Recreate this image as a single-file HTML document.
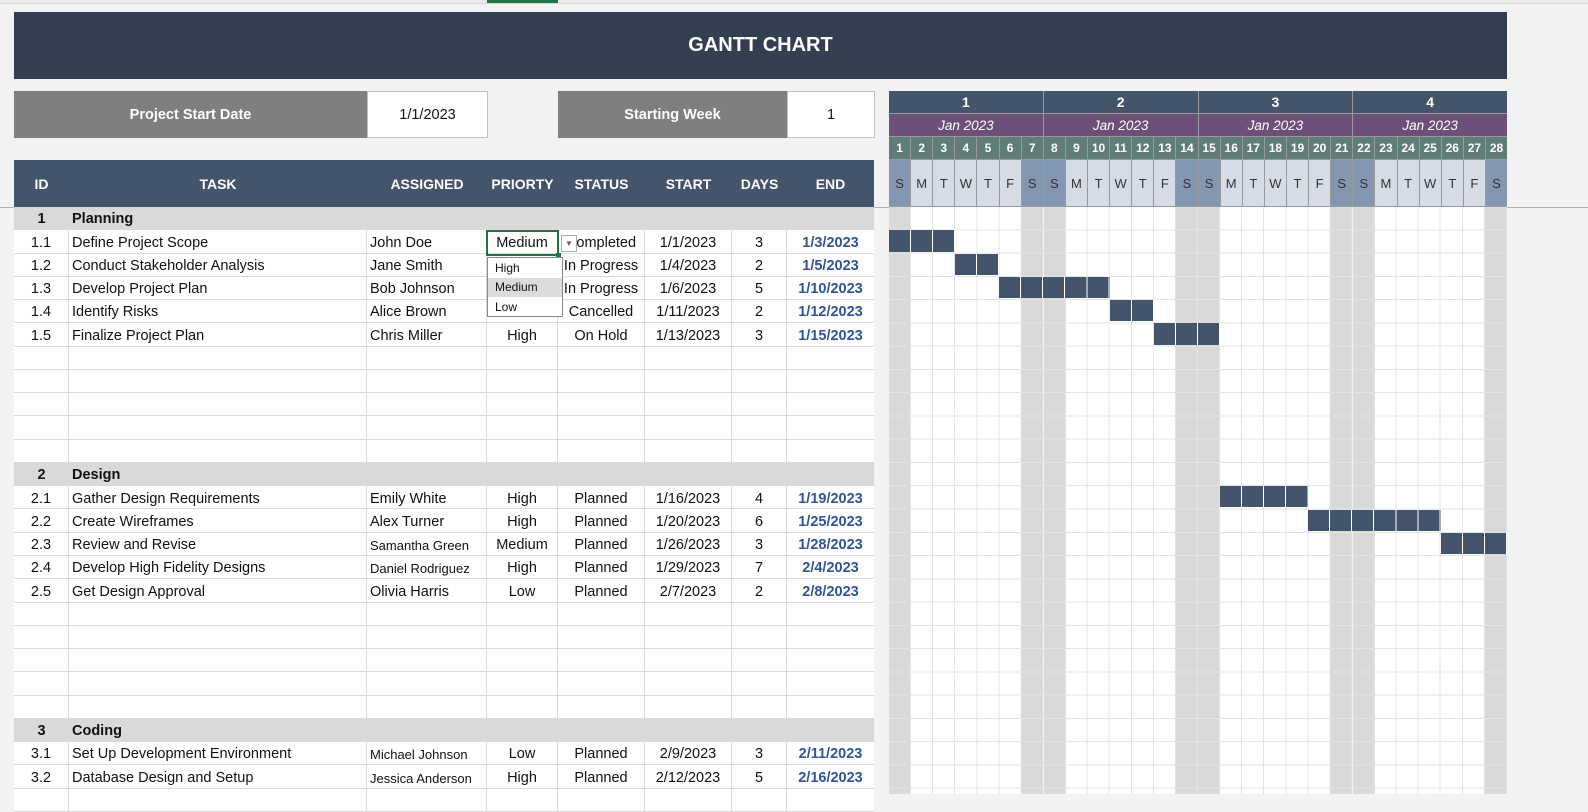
<!DOCTYPE html>
<html><head><meta charset="utf-8"><style>
*{box-sizing:border-box;margin:0;padding:0}
body{width:1588px;height:794px;overflow:hidden;background:#f2f2f2;font-family:"Liberation Sans",Arial,sans-serif;position:relative;color:#111}
.abs{position:absolute}
.topbar{left:0;top:0;width:1588px;height:4px;background:#e9e9e9;border-bottom:1px solid #d8d8d8}
.tab{left:487px;top:0;width:71px;height:3px;background:#217346}
.title{left:14px;top:12px;width:1493px;height:67px;background:#333f50;color:#fff;font-weight:bold;font-size:20px;display:flex;align-items:center;justify-content:center}
.lbl{background:#7f7f7f;color:#fff;font-weight:bold;font-size:14.5px;display:flex;align-items:center;justify-content:center;height:47px;top:91px}
.val{background:#fff;border:1px solid #bfbfbf;font-size:14.5px;display:flex;align-items:center;justify-content:center;height:47px;top:91px}
.hdr{left:14px;top:160px;width:860px;height:47px;background:#44546a;color:#fff;font-weight:bold;font-size:14px;display:flex;align-items:center}
.hdr div,.row div{flex:none;white-space:nowrap;overflow:hidden}
.c1{width:55px;text-align:center}.c2{width:298px;padding-left:3px}.c3{width:120px;padding-left:3px}.c4{width:71px;text-align:center}.c5{width:87px;text-align:center}.c6{width:87px;text-align:center}.c7{width:55px;text-align:center}.c8{width:87px;text-align:center}
.hdr .c2{text-align:center;padding-left:0}.hdr .c3{text-align:center;padding-left:0}
.tbl{left:14px;top:207px;width:860px;background:#fff}
.row{height:23.27px;display:flex;font-size:14.5px;border-bottom:1px solid #dadada;align-items:center}
.row div{height:100%;display:flex;align-items:center;border-right:1px solid #dadada;line-height:1;padding-top:3px}
.row .c1,.row .c4,.row .c5,.row .c6,.row .c7,.row .c8{justify-content:center}
.row .c8{color:#2f5597;font-weight:bold;border-right:none}
.grp{background:#d9d9d9;font-weight:bold}
.grp div{border-right:none}
.sm{font-size:13px}
.gh{left:889px;width:618px;display:flex}
.gh div{flex:1;display:flex;align-items:center;justify-content:center;border-right:1px solid #9a9a9a;border-bottom:1px solid #9a9a9a}
.gh div:last-child{border-right:none}
.wk{top:91px;height:23px;background:#44546a;color:#fff;font-weight:bold;font-size:14px}
.mo{top:114px;height:23px;background:#6d5079;color:#fff;font-style:italic;font-size:13.5px}
.dy{top:137px;height:23px;background:#5f7d78;color:#fff;font-weight:bold;font-size:12px}
.dw{top:160px;height:47px;color:#333;font-size:13px}
.dw div{background:#d6dce5}
.dw div.we{background:#8497b0}
.gbody{left:889px;top:207px;width:618px;height:587px;background:#fff}
.wes{top:207px;width:22.07px;height:587px;background:#d9d9d9}
.grid{left:889px;top:207px;width:618px;height:587px;background-image:repeating-linear-gradient(to right,transparent 0 21.07px,#e4e4e4 21.07px 22.07px),repeating-linear-gradient(to bottom,transparent 0 22.27px,#e4e4e4 22.27px 23.27px)}
.bar{height:21.27px;background:repeating-linear-gradient(to right,#44546a 0 21.07px,#fff 21.07px 22.07px)}
.hline{left:0;top:207px;width:1588px;height:1px;background:#b0b0b0}
.dd{left:487px;top:257px;width:76px;height:60px;background:#fff;border:1px solid #8a8a8a;font-size:12px}
.dd div{height:19.5px;padding-left:7px;display:flex;align-items:center}
</style></head><body>
<div class="abs topbar"></div><div class="abs tab"></div>
<div class="abs title">GANTT CHART</div>
<div class="abs lbl" style="left:14px;width:353px">Project Start Date</div>
<div class="abs val" style="left:367px;width:121px">1/1/2023</div>
<div class="abs lbl" style="left:558px;width:229px">Starting Week</div>
<div class="abs val" style="left:787px;width:88px">1</div>
<div class="abs hline"></div>
<div class="abs hdr"><div class="c1">ID</div><div class="c2">TASK</div><div class="c3">ASSIGNED</div><div class="c4">PRIORTY</div><div class="c5">STATUS</div><div class="c6">START</div><div class="c7">DAYS</div><div class="c8">END</div></div>
<div class="abs tbl">
<div class="row grp"><div class="c1">1</div><div class="c2">Planning</div></div>
<div class="row"><div class="c1">1.1</div><div class="c2">Define Project Scope</div><div class="c3">John Doe</div><div class="c4">Medium</div><div class="c5">Completed</div><div class="c6">1/1/2023</div><div class="c7">3</div><div class="c8">1/3/2023</div></div>
<div class="row"><div class="c1">1.2</div><div class="c2">Conduct Stakeholder Analysis</div><div class="c3">Jane Smith</div><div class="c4">High</div><div class="c5">In Progress</div><div class="c6">1/4/2023</div><div class="c7">2</div><div class="c8">1/5/2023</div></div>
<div class="row"><div class="c1">1.3</div><div class="c2">Develop Project Plan</div><div class="c3">Bob Johnson</div><div class="c4">Medium</div><div class="c5">In Progress</div><div class="c6">1/6/2023</div><div class="c7">5</div><div class="c8">1/10/2023</div></div>
<div class="row"><div class="c1">1.4</div><div class="c2">Identify Risks</div><div class="c3">Alice Brown</div><div class="c4">Low</div><div class="c5">Cancelled</div><div class="c6">1/11/2023</div><div class="c7">2</div><div class="c8">1/12/2023</div></div>
<div class="row"><div class="c1">1.5</div><div class="c2">Finalize Project Plan</div><div class="c3">Chris Miller</div><div class="c4">High</div><div class="c5">On Hold</div><div class="c6">1/13/2023</div><div class="c7">3</div><div class="c8">1/15/2023</div></div>
<div class="row"><div class="c1"></div><div class="c2"></div><div class="c3"></div><div class="c4"></div><div class="c5"></div><div class="c6"></div><div class="c7"></div><div class="c8"></div></div>
<div class="row"><div class="c1"></div><div class="c2"></div><div class="c3"></div><div class="c4"></div><div class="c5"></div><div class="c6"></div><div class="c7"></div><div class="c8"></div></div>
<div class="row"><div class="c1"></div><div class="c2"></div><div class="c3"></div><div class="c4"></div><div class="c5"></div><div class="c6"></div><div class="c7"></div><div class="c8"></div></div>
<div class="row"><div class="c1"></div><div class="c2"></div><div class="c3"></div><div class="c4"></div><div class="c5"></div><div class="c6"></div><div class="c7"></div><div class="c8"></div></div>
<div class="row"><div class="c1"></div><div class="c2"></div><div class="c3"></div><div class="c4"></div><div class="c5"></div><div class="c6"></div><div class="c7"></div><div class="c8"></div></div>
<div class="row grp"><div class="c1">2</div><div class="c2">Design</div></div>
<div class="row"><div class="c1">2.1</div><div class="c2">Gather Design Requirements</div><div class="c3">Emily White</div><div class="c4">High</div><div class="c5">Planned</div><div class="c6">1/16/2023</div><div class="c7">4</div><div class="c8">1/19/2023</div></div>
<div class="row"><div class="c1">2.2</div><div class="c2">Create Wireframes</div><div class="c3">Alex Turner</div><div class="c4">High</div><div class="c5">Planned</div><div class="c6">1/20/2023</div><div class="c7">6</div><div class="c8">1/25/2023</div></div>
<div class="row"><div class="c1">2.3</div><div class="c2">Review and Revise</div><div class="c3 sm">Samantha Green</div><div class="c4">Medium</div><div class="c5">Planned</div><div class="c6">1/26/2023</div><div class="c7">3</div><div class="c8">1/28/2023</div></div>
<div class="row"><div class="c1">2.4</div><div class="c2">Develop High Fidelity Designs</div><div class="c3 sm">Daniel Rodriguez</div><div class="c4">High</div><div class="c5">Planned</div><div class="c6">1/29/2023</div><div class="c7">7</div><div class="c8">2/4/2023</div></div>
<div class="row"><div class="c1">2.5</div><div class="c2">Get Design Approval</div><div class="c3">Olivia Harris</div><div class="c4">Low</div><div class="c5">Planned</div><div class="c6">2/7/2023</div><div class="c7">2</div><div class="c8">2/8/2023</div></div>
<div class="row"><div class="c1"></div><div class="c2"></div><div class="c3"></div><div class="c4"></div><div class="c5"></div><div class="c6"></div><div class="c7"></div><div class="c8"></div></div>
<div class="row"><div class="c1"></div><div class="c2"></div><div class="c3"></div><div class="c4"></div><div class="c5"></div><div class="c6"></div><div class="c7"></div><div class="c8"></div></div>
<div class="row"><div class="c1"></div><div class="c2"></div><div class="c3"></div><div class="c4"></div><div class="c5"></div><div class="c6"></div><div class="c7"></div><div class="c8"></div></div>
<div class="row"><div class="c1"></div><div class="c2"></div><div class="c3"></div><div class="c4"></div><div class="c5"></div><div class="c6"></div><div class="c7"></div><div class="c8"></div></div>
<div class="row"><div class="c1"></div><div class="c2"></div><div class="c3"></div><div class="c4"></div><div class="c5"></div><div class="c6"></div><div class="c7"></div><div class="c8"></div></div>
<div class="row grp"><div class="c1">3</div><div class="c2">Coding</div></div>
<div class="row"><div class="c1">3.1</div><div class="c2">Set Up Development Environment</div><div class="c3 sm">Michael Johnson</div><div class="c4">Low</div><div class="c5">Planned</div><div class="c6">2/9/2023</div><div class="c7">3</div><div class="c8">2/11/2023</div></div>
<div class="row"><div class="c1">3.2</div><div class="c2">Database Design and Setup</div><div class="c3 sm">Jessica Anderson</div><div class="c4">High</div><div class="c5">Planned</div><div class="c6">2/12/2023</div><div class="c7">5</div><div class="c8">2/16/2023</div></div>
<div class="row"><div class="c1"></div><div class="c2"></div><div class="c3"></div><div class="c4"></div><div class="c5"></div><div class="c6"></div><div class="c7"></div><div class="c8"></div></div>
</div>
<div class="abs" style="left:486px;top:230px;width:73px;height:26px;border:2px solid #217346"></div>
<div class="abs" style="left:556px;top:253px;width:5px;height:5px;background:#217346"></div>
<div class="abs" style="left:561px;top:235px;width:16px;height:17px;background:#fff;border:1px solid #aaa;font-size:8px;color:#666;display:flex;align-items:center;justify-content:center">&#9660;</div>
<div class="abs dd"><div>High</div><div style="background:#dcdcdc">Medium</div><div>Low</div></div>
<div class="abs gh wk"><div>1</div><div>2</div><div>3</div><div>4</div></div>
<div class="abs gh mo"><div>Jan 2023</div><div>Jan 2023</div><div>Jan 2023</div><div>Jan 2023</div></div>
<div class="abs gh dy"><div>1</div><div>2</div><div>3</div><div>4</div><div>5</div><div>6</div><div>7</div><div>8</div><div>9</div><div>10</div><div>11</div><div>12</div><div>13</div><div>14</div><div>15</div><div>16</div><div>17</div><div>18</div><div>19</div><div>20</div><div>21</div><div>22</div><div>23</div><div>24</div><div>25</div><div>26</div><div>27</div><div>28</div></div>
<div class="abs gh dw"><div class="we">S</div><div>M</div><div>T</div><div>W</div><div>T</div><div>F</div><div class="we">S</div><div class="we">S</div><div>M</div><div>T</div><div>W</div><div>T</div><div>F</div><div class="we">S</div><div class="we">S</div><div>M</div><div>T</div><div>W</div><div>T</div><div>F</div><div class="we">S</div><div class="we">S</div><div>M</div><div>T</div><div>W</div><div>T</div><div>F</div><div class="we">S</div></div>
<div class="abs gbody"></div>
<div class="abs wes" style="left:889px"></div><div class="abs wes" style="left:1021.4px"></div><div class="abs wes" style="left:1043.5px"></div><div class="abs wes" style="left:1175.9px"></div><div class="abs wes" style="left:1198px"></div><div class="abs wes" style="left:1330.4px"></div><div class="abs wes" style="left:1352.5px"></div><div class="abs wes" style="left:1484.9px"></div>
<div class="abs grid"></div>
<div class="abs bar" style="left:889px;top:230.3px;width:66.2px"></div>
<div class="abs bar" style="left:955.2px;top:253.5px;width:44.1px"></div>
<div class="abs bar" style="left:999.3px;top:276.8px;width:110.4px"></div>
<div class="abs bar" style="left:1109.7px;top:300.1px;width:44.1px"></div>
<div class="abs bar" style="left:1153.8px;top:323.4px;width:66.2px"></div>
<div class="abs bar" style="left:1220px;top:486.2px;width:88.3px"></div>
<div class="abs bar" style="left:1308.3px;top:509.5px;width:132.4px"></div>
<div class="abs bar" style="left:1440.7px;top:532.8px;width:66.3px"></div>
</body></html>
